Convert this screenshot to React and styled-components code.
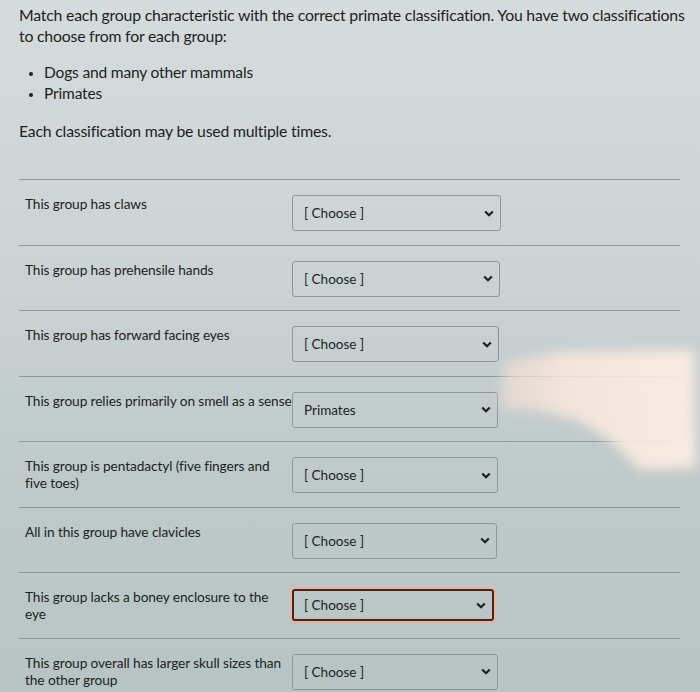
import React from 'react'
import styled, { createGlobalStyle, css } from 'styled-components'

const GlobalStyle = createGlobalStyle`
  html, body {
    margin: 0;
    padding: 0;
  }

  body {
    width: 700px;
    height: 692px;
    overflow: hidden;
    font-family: Lato, "Open Sans", sans-serif;
    color: #1a1f22;
    background: linear-gradient(180deg, #d6dbdc 0%, #cdd4d5 35%, #bfc9c9 70%, #b8c4c4 100%);
  }
`

const Page = styled.div`
  position: relative;
  width: 700px;
  height: 692px;
  overflow: hidden;
  box-sizing: border-box;
  padding: 4px 6px 0 19px;
`

const Intro = styled.p`
  margin: 0;
  font-size: 15.8px;
  line-height: 21px;
  letter-spacing: -0.2px;
`

const Options = styled.ul`
  margin: 16px 0 0;
  padding: 0 0 0 25px;
  font-size: 15.5px;
  line-height: 21px;
  letter-spacing: -0.15px;
  list-style: disc;

  li::marker {
    font-size: 12px;
  }
`

const Note = styled(Intro)`
  margin-top: 16px;
`

const Questions = styled.div`
  margin-top: 38px;
  width: 661px;
`

const Row = styled.div`
  display: flex;
  align-items: flex-start;
  border-top: 1px solid #8e999a;
  padding: 15px 0 13.5px 6px;
  min-height: 36px;
`

const Prompt = styled.div`
  width: 267px;
  flex-shrink: 0;
  font-size: 13.7px;
  line-height: 17px;
  letter-spacing: -0.1px;
`

const Select = styled.div`
  box-sizing: border-box;
  width: ${(p) => p.width || 208}px;
  height: 36px;
  display: flex;
  align-items: center;
  justify-content: space-between;
  padding: 0 6px 0 11px;
  border: 1px solid #8c9798;
  border-radius: 3px;
  font-size: 13.5px;
  color: #1a1f22;

  ${(p) =>
    p.focused &&
    css`
      height: 32px;
      margin-top: 1px;
      border: 2px solid #4e2218;
      box-shadow: 0 0 0 2px #e9b49b;
      padding-left: 10px;
    `}
`

const Chevron = () => (
  <svg width="10" height="7" viewBox="0 0 10 7">
    <path d="M1.2 1.5 L5 5.2 L8.8 1.5" fill="none" stroke="#1a1f22" strokeWidth="2.2" />
  </svg>
)

// soft light reflection lying over the right half of the list
const GlareLayer = styled.svg`
  position: absolute;
  left: 0;
  top: 0;
  pointer-events: none;
`

const Glare = () => (
  <GlareLayer width="700" height="692" viewBox="0 0 700 692">
    <defs>
      <filter id="soft" x="-20%" y="-20%" width="140%" height="140%">
        <feGaussianBlur stdDeviation="6" />
      </filter>
      <linearGradient id="warm" x1="0" y1="0" x2="1" y2="0">
        <stop offset="0" stopColor="#f6e2d6" stopOpacity="0.55" />
        <stop offset="0.35" stopColor="#fbe9de" stopOpacity="0.85" />
        <stop offset="1" stopColor="#fdeee4" stopOpacity="0.92" />
      </linearGradient>
    </defs>
    <path
      d="M505 362 L560 352 L694 350 L696 468 L640 470 L612 442 L578 420 L540 411 L500 408 Z"
      fill="url(#warm)"
      filter="url(#soft)"
    />
  </GlareLayer>
)

const questions = [
  { text: 'This group has claws', value: '[ Choose ]', width: 209 },
  { text: 'This group has prehensile hands', value: '[ Choose ]', width: 208 },
  { text: 'This group has forward facing eyes', value: '[ Choose ]', width: 207 },
  { text: 'This group relies primarily on smell as a sense', value: 'Primates', width: 206 },
  { text: 'This group is pentadactyl (five fingers and five toes)', value: '[ Choose ]', width: 206 },
  { text: 'All in this group have clavicles', value: '[ Choose ]', width: 205 },
  { text: 'This group lacks a boney enclosure to the eye', value: '[ Choose ]', width: 202, focused: true },
  { text: 'This group overall has larger skull sizes than the other group', value: '[ Choose ]', width: 206 },
]

export default function App() {
  return (
    <Page>
      <GlobalStyle />
      <Intro>
        Match each group characteristic with the correct primate classification. You have two
        classifications to choose from for each group:
      </Intro>
      <Options>
        <li>Dogs and many other mammals</li>
        <li>Primates</li>
      </Options>
      <Note>Each classification may be used multiple times.</Note>
      <Questions>
        {questions.map((q, i) => (
          <Row key={i}>
            <Prompt>{q.text}</Prompt>
            <Select width={q.width} focused={q.focused}>
              <span>{q.value}</span>
              <Chevron />
            </Select>
          </Row>
        ))}
      </Questions>
      <Glare />
    </Page>
  )
}
